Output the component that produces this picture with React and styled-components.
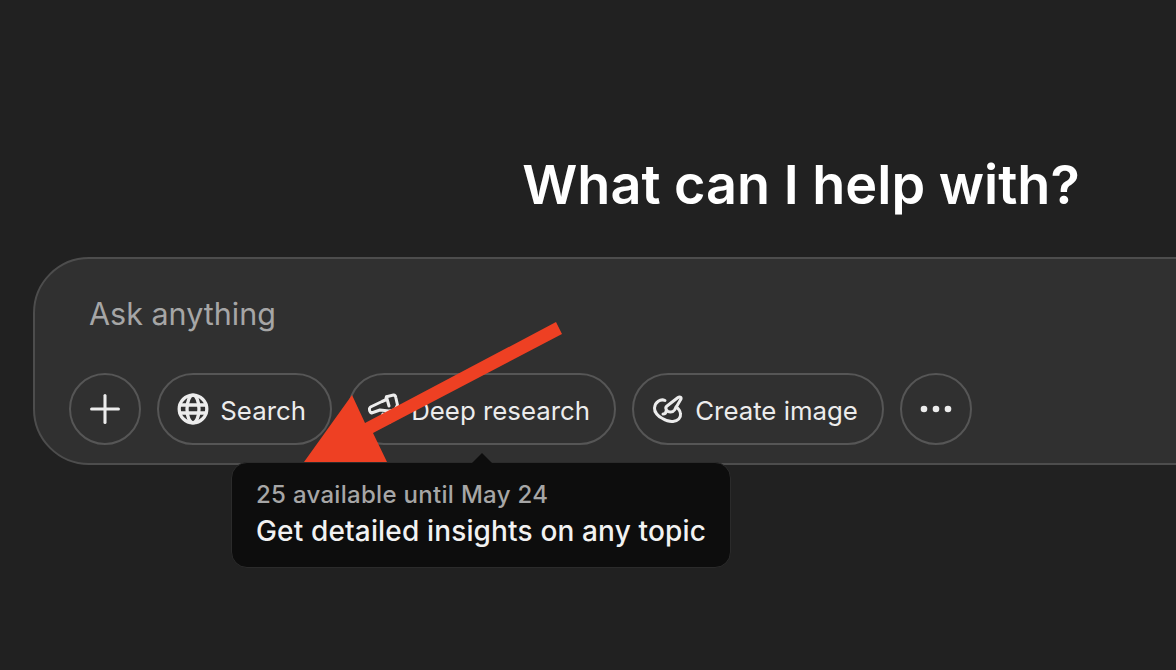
import React from "react";
import styled, { createGlobalStyle } from "styled-components";
import { Plus } from "lucide-react";

const Global = createGlobalStyle`
  html, body { margin: 0; padding: 0; background: #212121; overflow: hidden; }
  body { font-family: Inter, "Liberation Sans", sans-serif; -webkit-font-smoothing: antialiased; }
`;

const Page = styled.main`
  position: relative;
  width: 1176px;
  height: 670px;
  overflow: hidden;
  padding: 148px 0 0 33px;
  box-sizing: border-box;
`;

const Column = styled.div`
  width: 1536px;
  display: flex;
  flex-direction: column;
  gap: 35px;
`;

const Heading = styled.h1`
  margin: 0;
  color: #fff;
  font-size: 54px;
  line-height: 74px;
  font-weight: 600;
  text-align: center;
`;

const Composer = styled.div`
  position: relative;
  height: 208px;
  box-sizing: border-box;
  border: 2px solid #4d4d4d;
  border-radius: 56px;
  background: #303030;
  padding: 35px 34px 0;
  display: flex;
  flex-direction: column;
  gap: 39px;
`;

const Placeholder = styled.div`
  color: #a6a6a6;
  font-size: 30.5px;
  line-height: 40px;
  padding-left: 20px;
`;

const Toolbar = styled.div`
  display: flex;
  align-items: center;
  gap: 16.3px;
`;

const ToolButton = styled.button`
  height: 72px;
  width: ${(p) => (p.$round ? "72px" : "auto")};
  box-sizing: border-box;
  display: inline-flex;
  align-items: center;
  justify-content: center;
  gap: 11px;
  padding: ${(p) => (p.$round ? "0" : "0 24px 0 18px")};
  background: transparent;
  border: 2px solid #565656;
  border-radius: 36px;
  color: #ececec;
  font: 400 25.8px/36px Inter, "Liberation Sans", sans-serif;
`;

const Label = styled.span`
  padding-top: 3px;
`;

const Tooltip = styled.div`
  position: absolute;
  left: 231px;
  top: 462px;
  width: 500px;
  height: 106px;
  box-sizing: border-box;
  padding: 15px 24px 0 24px;
  background: #0d0d0d;
  border: 1px solid #2b2b2b;
  border-radius: 16px;
  z-index: 2;
  &::before {
    content: "";
    position: absolute;
    left: 240px;
    top: -10px;
    width: 0;
    height: 0;
    border-left: 10px solid transparent;
    border-right: 10px solid transparent;
    border-bottom: 10px solid #0d0d0d;
  }
`;

const TipMeta = styled.div`
  color: #a6a6a6;
  font-size: 24px;
  line-height: 34px;
  font-weight: 500;
  letter-spacing: 0.3px;
  white-space: nowrap;
`;

const TipText = styled.div`
  color: #f2f2f2;
  font-size: 28px;
  line-height: 38px;
  font-weight: 500;
  letter-spacing: 0.15px;
  white-space: nowrap;
`;

const Annotation = styled.svg`
  position: absolute;
  left: 0;
  top: 0;
  z-index: 1;
  pointer-events: none;
`;

const iconProps = {
  width: 32,
  height: 32,
  viewBox: "0 0 32 32",
  fill: "none",
  stroke: "currentColor",
  strokeWidth: 3,
  strokeLinecap: "round",
  strokeLinejoin: "round",
};

const Globe = () => (
  <svg {...iconProps} strokeWidth={3.3}>
    <circle cx="16" cy="16" r="13.800" />
    <ellipse cx="16" cy="16" rx="6" ry="13.800" />
    <path d="M3 12h26M3 20h26" />
  </svg>
);

const Telescope = () => (
  <svg {...iconProps}>
    <path d="M2.500 14L14 8.500L17.500 7L18.500 3.700L25.500 2C27 1.800 27.500 3 27.800 4.500L29.500 12L27 17L21 18L12 17L3.500 20C2 19.500 1.300 17 1.500 15.500C1.600 15 2 14.500 2.500 14Z" />
    <path d="M18.500 4L21 13" />
    <path d="M15 21l-4 8M18 20l4 9" />
  </svg>
);

const Brush = () => (
  <svg {...iconProps}>
    <path d="M13 7.500C8.500 5.500 3 9 2.500 15C2.200 19 6 23.500 10.500 25.500C13 27 17 29 21 28.500C26 28 29 25 28.500 21C28.300 18.500 26.500 15.500 24 14" />
    <path d="M15 13L26 4.500C27.500 3.500 29.500 4 29 6L22.500 17C20.500 20 16 19.500 14.500 17C13.500 15.500 13.700 14 15 13Z" />
    <path d="M14 18C14 20 13 21 11 21" />
  </svg>
);

const Dots = () => (
  <svg width="32" height="8" viewBox="0 0 32 8" fill="currentColor">
    <circle cx="4" cy="4" r="3.300" />
    <circle cx="16" cy="4" r="3.300" />
    <circle cx="28" cy="4" r="3.300" />
  </svg>
);

export default function App() {
  return (
    <Page>
      <Global />
      <Column>
        <Heading>What can I help with?</Heading>
        <Composer>
          <Placeholder>Ask anything</Placeholder>
          <Toolbar>
            <ToolButton $round aria-label="Add">
              <Plus size={46} strokeWidth={1.6} />
            </ToolButton>
            <ToolButton><Globe /><Label>Search</Label></ToolButton>
            <ToolButton><Telescope /><Label>Deep research</Label></ToolButton>
            <ToolButton><Brush /><Label>Create image</Label></ToolButton>
            <ToolButton $round aria-label="More"><Dots /></ToolButton>
          </Toolbar>
        </Composer>
      </Column>
      <Annotation width="1176" height="670" viewBox="0 0 1176 670">
        <polygon fill="#ee4023" points="304,462 352,395 365,423 556,322 562,334 373,433 387,462" />
      </Annotation>
      <Tooltip>
        <TipMeta>25 available until May 24</TipMeta>
        <TipText>Get detailed insights on any topic</TipText>
      </Tooltip>
    </Page>
  );
}
